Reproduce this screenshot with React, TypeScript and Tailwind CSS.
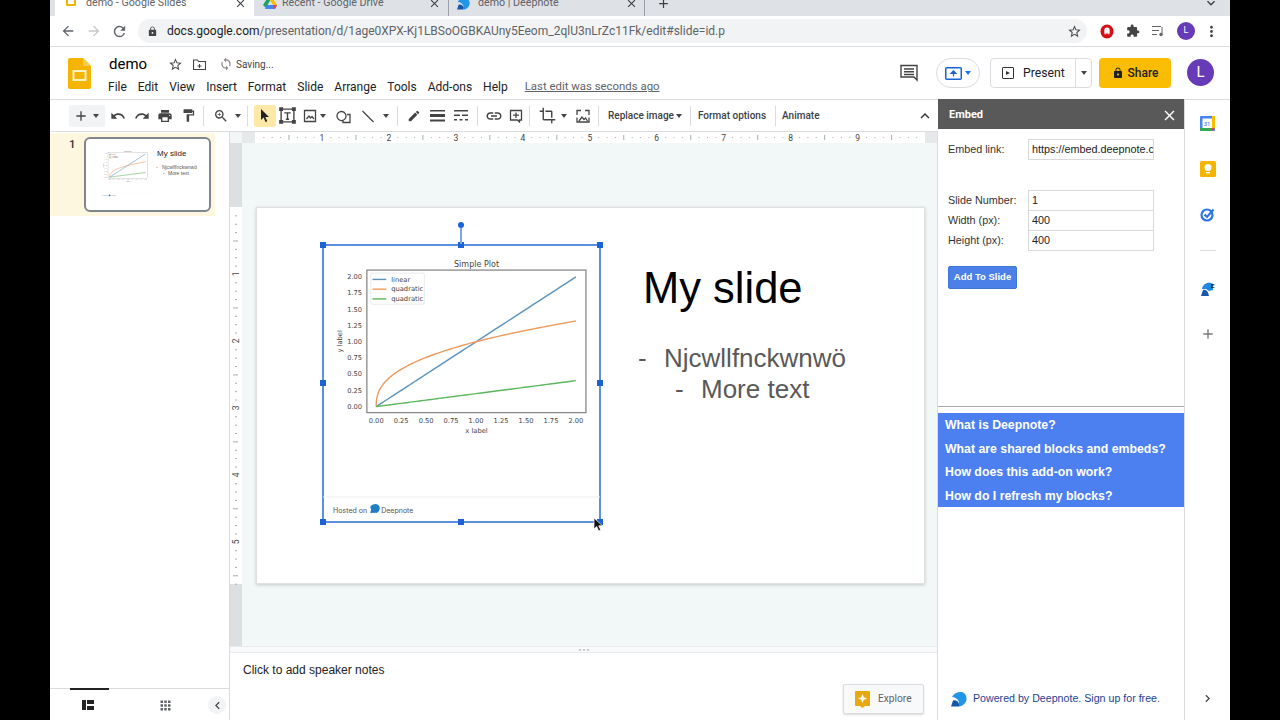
import React from 'react'
import {
  MdAdd, MdApps, MdArrowBack, MdArrowForward, MdChevronLeft, MdChevronRight, MdClose, MdCreate, MdCrop,
  MdExpandLess, MdExtension, MdFormatPaint, MdKeyboardArrowDown, MdLink, MdLock, MdMoreVert, MdPrint, MdRedo,
  MdRefresh, MdStarBorder, MdSync, MdUndo, MdZoomIn,
} from 'react-icons/md'

const DeepnoteLogo = ({ size = 16 }: { size?: number }) => (
  <svg width={size} height={size} viewBox="0 0 16 16">
    <path d="M1 6C3 2 7 .5 11 1c3 1 5 4 4.500 7.500C15 12 12 15 8 15.500L8 11C7 8 4 6 1 6Z" fill="#2196e8" />
    <path d="M0 15.500 2 9.500C4 8.500 7 9.500 8 12.500V15.500Z" fill="#1557a8" />
  </svg>
)

const Caret = ({ color = 'border-t-[#444]' }: { color?: string }) => (
  <span className={`inline-block w-0 h-0 border-x-[3.500px] border-x-transparent border-t-[4px] ${color}`} />
)

const Sep = () => <span className="block w-px h-[20px] bg-[#dadce0] shrink-0" />

const Tab = ({ icon, title, active, width }: { icon: React.ReactNode; title: string; active?: boolean; width: string }) => (
  <div className={`${width} h-[16px] pb-[10px] flex items-center shrink-0 ${active ? 'bg-white' : ''}`}>
    {icon}
    <span className="text-[10.700px] text-[#5f6368] font-['Roboto',sans-serif] flex-1 leading-none">{title}</span>
    <MdClose className="text-[#3c4043] text-[13px] shrink-0" />
  </div>
)

// matplotlib figure embedded in the slide, drawn in the coordinates of its 278px box
const Plot = ({ className, weight = 1.4 }: { className?: string; weight?: number }) => {
  const x0 = 54
  const y0 = 162
  const sx = 99.5
  const sy = 64.6
  const curve = (fn: (x: number) => number) => {
    const pts: string[] = []
    for (let i = 0; i <= 80; i++) {
      const x = 2 * Math.pow(i / 80, 2)
      pts.push(`${(x0 + x * sx).toFixed(2)},${(y0 - fn(x) * sy).toFixed(2)}`)
    }
    return pts.join(' ')
  }
  const ticks = ['0.00', '0.25', '0.50', '0.75', '1.00', '1.25', '1.50', '1.75', '2.00']
  return (
    <svg viewBox="0 0 278 278" className={className} fontFamily="'DejaVu Sans',sans-serif" fill="#444">
      <text x="154" y="22.500" fontSize="8" textAnchor="middle">Simple Plot</text>
      <rect x="44.700" y="26" width="218.300" height="142" fill="#fff" stroke="#8a8a8a" strokeWidth="1.300" />
      {ticks.map((t, i) => (
        <g key={t}>
          <text x={x0 + i * 24.875} y="178" fontSize="6.700" textAnchor="middle">{t}</text>
          <text x="40" y={y0 + 2.300 - i * 16.15} fontSize="6.700" textAnchor="end">{t}</text>
        </g>
      ))}
      <text x="154" y="188" fontSize="6.700" textAnchor="middle">x label</text>
      <text transform="translate(20 97) rotate(-90)" fontSize="6.700" textAnchor="middle">y label</text>
      <polyline points={curve((x) => x)} fill="none" stroke="#5b93bd" strokeWidth={weight} />
      <polyline points={curve((x) => Math.pow(x, 0.4))} fill="none" stroke="#ee9a5d" strokeWidth={weight} />
      <polyline points={curve((x) => 0.2 * x)} fill="none" stroke="#5cb85c" strokeWidth={weight} />
      <rect x="48.700" y="29" width="53.300" height="31" rx="1.500" fill="#fff" stroke="#ddd" strokeWidth=".6" />
      <path d="M50.300 35.300H64" stroke="#5b93bd" strokeWidth={weight} />
      <path d="M50.300 45H64" stroke="#ee9a5d" strokeWidth={weight} />
      <path d="M50.300 54.700H64" stroke="#5cb85c" strokeWidth={weight} />
      <text x="69" y="37.500" fontSize="6.700">linear</text>
      <text x="69" y="47.300" fontSize="6.700">quadratic</text>
      <text x="69" y="57" fontSize="6.700">quadratic</text>
      <path d="M1 252H277" stroke="#eee" />
      <g fontFamily="'Inter',sans-serif" fontSize="7" fill="#555">
        <text x="11" y="268">Hosted on</text>
        <text x="59" y="268">Deepnote</text>
      </g>
      <path d="M48 262c2-3 6-3.500 8-2 2.500 2 2 6.500-1.500 8l-1-.2-5.500.2 1-3.500Z" fill="#1f7fc9" />
    </svg>
  )
}

const Handle = ({ className }: { className: string }) => (
  <span className={`absolute w-[6px] h-[6px] bg-[#1a62d6] ${className}`} />
)

const HorizontalRuler = () => {
  const marks = Array.from({ length: 80 }, (_, i) => i)
  return (
    <svg width="683" height="11" className="block" fontFamily="'Roboto',sans-serif">
      <rect x="13" width="670" height="11" fill="#fff" />
      {marks.map((i) => {
        const x = 13 + i * 8.37
        if (i % 8 === 0) {
          return i === 0 ? null : (
            <text key={i} x={x} y="8.500" fontSize="8.500" fill="#444" textAnchor="middle">{i / 8}</text>
          )
        }
        return <rect key={i} x={x} y={i % 4 === 0 ? 3 : 5} width="1" height={i % 4 === 0 ? 5 : 1} fill="#a8acb0" />
      })}
    </svg>
  )
}

const VerticalRuler = () => {
  const marks = Array.from({ length: 46 }, (_, i) => i)
  return (
    <svg width="12" height="503" className="block shrink-0" fontFamily="'Roboto',sans-serif">
      <rect width="12" height="503" fill="#dde0e3" />
      <rect y="64" width="12" height="377" fill="#fff" />
      {marks.map((i) => {
        const y = 64 + i * 8.37
        if (i % 8 === 0) {
          return i === 0 ? null : (
            <text key={i} transform={`translate(9 ${y}) rotate(-90)`} fontSize="8.500" fill="#444" textAnchor="middle">{i / 8}</text>
          )
        }
        return <rect key={i} x={i % 4 === 0 ? 3 : 5} y={y} width={i % 4 === 0 ? 5 : 2} height="1" fill="#a8acb0" />
      })}
    </svg>
  )
}

const ToolIcon = ({ d, size = 16 }: { d: string; size?: number }) => (
  <svg width={size} height={size} viewBox="0 0 16 16" fill="none" stroke="#444" strokeWidth="1.300">
    <path d={d} />
  </svg>
)

const Field = ({ label, value, className }: { label: string; value: string; className?: string }) => (
  <div className={`flex items-center h-[20px] ${className ?? ''}`}>
    <span className="w-[80px] text-[#333]">{label}</span>
    <div className="w-[126px] h-[21px] border border-[#d9d9d9] bg-white pl-[3px] flex items-center overflow-hidden whitespace-nowrap text-[#222]">{value}</div>
  </div>
)

const Faq = ({ children }: { children: string }) => (
  <div className="h-[23.500px] flex items-center pl-[7px] pt-[1.500px] text-[12.300px] font-bold text-white bg-[#4c80f1]">{children}</div>
)

export default function App() {
  return (
    <div className="w-[1280px] h-[720px] bg-black px-[50px] overflow-hidden font-['Roboto',sans-serif]">
      <div className="w-[1180px] h-[720px] bg-white flex flex-col overflow-hidden">
        {/* browser tabs */}
        <div className="h-[16px] bg-[#dee1e6] flex items-start overflow-hidden shrink-0 pl-[5px]">
          <Tab
            active
            width="w-[199px] pl-[11px] pr-[7px]"
            title="demo - Google Slides"
            icon={<span className="w-[10px] h-[13px] mr-[10px] -mt-[7px] rounded-[1px] border-[2px] border-[#f4b400] bg-white shrink-0" />}
          />
          <Tab
            width="w-[194px] pl-[9px] pr-[7px]"
            title="Recent - Google Drive"
            icon={
              <svg width="14" height="12" viewBox="0 0 14 12" className="mr-[5px] shrink-0">
                <path d="M5 0h4l5 8h-4Z" fill="#fbbc04" />
                <path d="M5 0l2 3.500L3 11 0 8Z" fill="#1ea362" />
                <path d="M4 8h10l-2 4H2Z" fill="#4285f4" />
                <path d="M11 8h3l-2 4-2-2Z" fill="#ea4335" />
              </svg>
            }
          />
          <span className="w-px h-[16px] bg-[#9aa0a6] shrink-0" />
          <Tab
            width="w-[195px] pl-[8px] pr-[6px]"
            title="demo | Deepnote"
            icon={<span className="mr-[8px] shrink-0"><DeepnoteLogo size={13} /></span>}
          />
          <span className="w-px h-[16px] bg-[#9aa0a6] shrink-0" />
          <MdAdd className="text-[#3c4043] text-[15px] ml-[11px] -mt-[4px] shrink-0" />
          <MdKeyboardArrowDown className="text-[#3c4043] text-[16px] ml-auto mr-[11px] -mt-[5px] shrink-0" />
        </div>

        {/* address bar */}
        <div className="h-[31px] flex items-center border-b border-[#dadce0] shrink-0 text-[#5f6368]">
          <MdArrowBack className="text-[16px] ml-[10px] text-[#5f6368]" />
          <MdArrowForward className="text-[16px] ml-[10px] text-[#c4c7cb]" />
          <MdRefresh className="text-[17px] ml-[9px]" />
          <div className="w-[949px] h-[24px] ml-[10px] rounded-full bg-[#f1f3f4] flex items-center pl-[9px] pr-[5px]">
            <MdLock className="text-[11px] mr-[9px] text-[#444]" />
            <span className="text-[12px] text-[#5f6368] whitespace-nowrap">
              <span className="text-[#202124]">docs.google.com</span>/presentation/d/1age0XPX-Kj1LBSoOGBKAUny5Eeom_2qlU3nLrZc11Fk/edit#slide=id.p
            </span>
            <MdStarBorder className="text-[15px] ml-auto text-[#444]" />
          </div>
          <svg width="14" height="15" viewBox="0 0 14 15" className="ml-[13px]">
            <ellipse cx="7" cy="7.500" rx="6.500" ry="7" fill="#d50f16" />
            <rect x="4.300" y="3.500" width="5.400" height="7.500" rx="2.500" fill="#fff" />
            <path d="M5.500 9.500h3V13h-3Z" fill="#d50f16" />
          </svg>
          <MdExtension className="text-[14px] ml-[12px] text-[#444]" />
          <svg width="13" height="12" viewBox="0 0 13 12" className="ml-[12px]" stroke="#666" fill="none">
            <path d="M0 1.500h9M0 5.500h7M0 9.500h5M10 2v7.500" />
            <circle cx="9" cy="9.500" r="1.300" fill="#666" />
          </svg>
          <span className="w-[18px] h-[18px] ml-[12px] rounded-full bg-[#673ab7] text-white text-[9px] flex items-center justify-center">L</span>
          <MdMoreVert className="text-[17px] ml-[8px] text-[#444]" />
        </div>

        {/* docs header */}
        <div className="h-[52px] flex shrink-0 relative">
          <svg width="23" height="31" viewBox="0 0 23 31" className="ml-[18px] mt-[11px] shrink-0">
            <path d="M2 0h13l8 8v21a2 2 0 0 1-2 2H2a2 2 0 0 1-2-2V2a2 2 0 0 1 2-2Z" fill="#f4b400" />
            <path d="M15 0l8 8h-8Z" fill="#f7cb4d" />
            <rect x="5.500" y="13" width="12" height="9" fill="none" stroke="#fff3c4" strokeWidth="2" />
          </svg>
          <div className="ml-[18px] flex flex-col">
            <div className="flex items-center h-[20px] mt-[7px]">
              <span className="text-[15px] text-black leading-none w-[59px]">demo</span>
              <MdStarBorder className="text-[15px] text-[#444]" />
              <svg width="13" height="11" viewBox="0 0 13 11" className="ml-[10px]" fill="none" stroke="#444" strokeWidth="1.100">
                <path d="M.5 1h4l1.200 1.500h6.800v8H.5ZM6.500 5v4M4.500 7h4" />
              </svg>
              <MdSync className="text-[14px] text-[#888] ml-[13px]" />
              <span className="text-[10px] text-[#444] ml-[3px]">Saving...</span>
            </div>
            <div className="flex items-center h-[20px] mt-[3px] -ml-px gap-x-[11px] text-[12px] text-[#202124] whitespace-nowrap">
              <span>File</span>
              <span>Edit</span>
              <span>View</span>
              <span>Insert</span>
              <span>Format</span>
              <span>Slide</span>
              <span>Arrange</span>
              <span>Tools</span>
              <span>Add-ons</span>
              <span>Help</span>
              <span className="ml-[6px] text-[11.400px] text-[#5f6368] underline">Last edit was seconds ago</span>
            </div>
          </div>
          <div className="ml-auto flex items-start pt-[11px] pr-[16px]">
            <svg width="18" height="18" viewBox="0 0 18 18" fill="none" stroke="#444" strokeWidth="1.400" className="mt-[6px]">
              <path d="M1 1.500h16v14.500l-3-3H1ZM4 5h10M4 7.800h10M4 10.500h10" />
            </svg>
            <div className="w-[44px] h-[30px] ml-[18px] rounded-full border border-[#dadce0] flex items-center justify-center gap-[3px]">
              <svg width="17" height="13" viewBox="0 0 17 13" fill="none">
                <rect x=".75" y=".75" width="15.500" height="11.500" rx="1" stroke="#1a62d6" strokeWidth="1.500" />
                <path d="M8.500 9.500V5M6 6.500 8.500 3.800 11 6.500Z" stroke="#1a62d6" strokeWidth="1.200" fill="#1a62d6" />
              </svg>
              <Caret color="border-t-[#1a73e8]" />
            </div>
            <div className="w-[102px] h-[30px] ml-[10px] rounded-[4px] border border-[#dadce0] flex items-center">
              <span className="w-[12px] h-[12px] ml-[11px] border-[1.500px] border-[#333] rounded-[1px] flex items-center justify-center">
                <span className="w-0 h-0 border-y-[2.500px] border-y-transparent border-l-[4px] border-l-[#333]" />
              </span>
              <span className="ml-[9px] text-[12.200px] text-[#202124] w-[52px]">Present</span>
              <span className="w-px h-[28px] bg-[#dadce0]" />
              <span className="flex-1 flex justify-center"><Caret /></span>
            </div>
            <div className="w-[72px] h-[30px] ml-[7px] rounded-[4px] bg-[#fbbc04] flex items-center justify-center gap-[4px] text-[12px] font-medium text-[#202124]">
              <MdLock className="text-[12px]" />
              Share
            </div>
            <span className="w-[27px] h-[27px] ml-[16px] mt-px rounded-full bg-[#673ab7] text-white text-[15px] flex items-center justify-center">L</span>
          </div>
        </div>

        <div className="flex flex-1 min-h-0 border-t border-[#dadce0] -mb-px">
          <div className="w-[888px] flex flex-col shrink-0">
            {/* toolbar */}
            <div className="h-[32px] flex items-center border-b border-[#dadce0] pl-[19px] shrink-0">
              <div className="w-[36px] h-[22px] bg-[#f1f3f4] rounded-[2px] flex items-center pl-[4px] gap-[4px]">
                <MdAdd className="text-[16px] text-[#444]" />
                <Caret />
              </div>
              <MdUndo className="text-[16px] text-[#444] ml-[5px]" />
              <MdRedo className="text-[16px] text-[#444] ml-[8px]" />
              <MdPrint className="text-[16px] text-[#444] ml-[7px]" />
              <MdFormatPaint className="text-[15px] text-[#444] ml-[8px]" />
              <span className="ml-[7px]"><Sep /></span>
              <MdZoomIn className="text-[16px] text-[#444] ml-[9px]" />
              <span className="ml-[6px] flex"><Caret /></span>
              <span className="ml-[6px]"><Sep /></span>
              <div className="w-[22px] h-[22px] ml-[6px] bg-[#fde8a8] rounded-[2px] flex items-center justify-center">
                <svg width="10" height="14" viewBox="0 0 10 14"><path d="M1 0v11l2.600-2.500L5.500 13l1.800-.8-2-4.300H9Z" fill="#222" /></svg>
              </div>
              <span className="ml-[3px] flex">
                <ToolIcon size={17} d="M2 2h12v12H2ZM5 5.500h6M8 5.500v6M6.500 11.500h3M.8.800h2.400v2.400H.8ZM12.800.800h2.400v2.400h-2.400ZM.8 12.800h2.400v2.400H.8ZM12.800 12.800h2.400v2.400h-2.400Z" />
              </span>
              <span className="ml-[6px] flex"><ToolIcon d="M2.500 2.500h11v11h-11ZM4.500 11l2.500-3 1.500 2 1.500-1.500 2 2.500" /></span>
              <span className="ml-[2px] flex"><Caret /></span>
              <span className="ml-[10px] flex"><ToolIcon d="M9.500 6a4.500 4.500 0 1 1-8.500 2 4.500 4.500 0 0 1 8.500-2ZM11 6.500h3v8H7V12" /></span>
              <span className="ml-[8px] flex"><ToolIcon d="M2.500 3 13.500 14" /></span>
              <span className="ml-[7px] flex"><Caret /></span>
              <span className="ml-[8px]"><Sep /></span>
              <MdCreate className="text-[14px] text-[#444] ml-[9px]" />
              <span className="ml-[9px] flex">
                <svg width="15" height="12" viewBox="0 0 15 12" fill="#444"><rect width="15" height="1.500" /><rect y="4" width="15" height="3" /><rect y="9.500" width="15" height="2" /></svg>
              </span>
              <span className="ml-[9px] flex">
                <svg width="14" height="12" viewBox="0 0 14 12" fill="#444">
                  <rect width="14" height="1.500" /><rect y="4.500" width="6" height="1.500" /><rect x="8" y="4.500" width="6" height="1.500" />
                  <rect y="9" width="3" height="1.500" /><rect x="5.500" y="9" width="3" height="1.500" /><rect x="11" y="9" width="3" height="1.500" />
                </svg>
              </span>
              <span className="ml-[9px]"><Sep /></span>
              <MdLink className="text-[18px] text-[#444] ml-[7px]" />
              <span className="ml-[5px] flex"><ToolIcon d="M2.500 2.500h11v9.500h-2v2l-2-2h-7ZM8 4.500v5.500M5 7.200h6" /></span>
              <span className="ml-[5px]"><Sep /></span>
              <MdCrop className="text-[17px] text-[#444] ml-[9px]" />
              <span className="ml-[5px] flex"><Caret /></span>
              <span className="ml-[8px] flex"><ToolIcon d="M2 7V2.500h4M10 2.500h4V7M2 9.500v4.500h12V9.500M4 13l3-4 2 2.500 1.500-1.500 2 3" /></span>
              <span className="ml-[7px]"><Sep /></span>
              <div className="ml-[9px] flex items-center gap-[2px] text-[10px] font-medium text-[#3c4043] whitespace-nowrap">
                Replace image
                <Caret />
              </div>
              <span className="ml-[8px]"><Sep /></span>
              <span className="ml-[7px] text-[10px] font-medium text-[#3c4043] whitespace-nowrap">Format options</span>
              <span className="ml-[9px]"><Sep /></span>
              <span className="ml-[6px] text-[10px] font-medium text-[#3c4043]">Animate</span>
              <MdExpandLess className="text-[18px] text-[#333] ml-[96px]" />
            </div>

            <div className="flex flex-1 min-h-0">
              {/* filmstrip */}
              <div className="w-[180px] border-r border-[#dadce0] flex flex-col shrink-0">
                <div className="w-[165px] h-[83px] mt-px bg-[#fef7e0] flex pt-[4px] pl-[19px]">
                  <span className="text-[11.500px] w-[15px] text-[#333] font-medium mt-[1px] leading-[12px]">1</span>
                  <div className="w-[127px] h-[75px] rounded-[6px] border-2 border-[#80868b] bg-white relative overflow-hidden">
                    <Plot className="absolute left-[14px] top-[9px] w-[50px] h-[50px]" weight={3.500} />
                    <span className="absolute left-[71px] top-[10px] text-[8px] leading-[10px] text-[#222] font-['Liberation_Sans',sans-serif] whitespace-nowrap">My slide</span>
                    <span className="absolute left-[70px] top-[25px] text-[5px] leading-[6px] text-[#555] font-['Liberation_Sans',sans-serif]">-</span>
                    <span className="absolute left-[76px] top-[25px] text-[5px] leading-[6px] text-[#555] font-['Liberation_Sans',sans-serif] whitespace-nowrap">Njcwllfnckwnwö</span>
                    <span className="absolute left-[77px] top-[31px] text-[5px] leading-[6px] text-[#555] font-['Liberation_Sans',sans-serif]">-</span>
                    <span className="absolute left-[82px] top-[31px] text-[5px] leading-[6px] text-[#555] font-['Liberation_Sans',sans-serif] whitespace-nowrap">More text</span>
                  </div>
                </div>
                <div className="mt-auto h-[33px] border-t border-[#dadce0] relative flex items-center">
                  <span className="absolute left-[20px] -top-px w-[39px] h-[2px] bg-[#222]" />
                  <svg width="12" height="10" viewBox="0 0 12 10" fill="#222" className="ml-[32px]">
                    <rect width="4" height="10" /><rect x="5" width="7" height="4" /><rect x="5" y="6" width="7" height="4" />
                  </svg>
                  <MdApps className="text-[15px] text-[#5f6368] ml-[64px]" />
                  <span className="w-[18px] h-[18px] ml-[35px] rounded-full bg-[#f1f3f4] flex items-center justify-center">
                    <MdChevronLeft className="text-[15px] text-[#444]" />
                  </span>
                </div>
              </div>

              {/* canvas + notes */}
              <div className="flex-1 flex flex-col min-w-0 border-r border-[#dadce0]">
                <div className="h-[514px] flex flex-col bg-[#f2f7f7] shrink-0">
                  <div className="h-[11px] flex bg-[#e6e8ea] shrink-0">
                    <span className="w-[12px] h-[11px] bg-[#f3f6f6]" />
                    <HorizontalRuler />
                  </div>
                  <div className="flex flex-1 min-h-0">
                    <VerticalRuler />
                    <div className="flex-1">
                      <div className="relative w-[669px] h-[377px] ml-[14px] mt-[64px] bg-white border border-[#e0e0e0] shadow-[0_1px_3px_rgba(60,64,67,0.25)]">
                        <div className="absolute left-[65px] top-[36px] w-[279px] h-[279px] border-2 border-[#5b8fe0]">
                          <Plot className="absolute -left-[2px] -top-[2px] w-[279px] h-[279px]" />
                          <Handle className="-left-[4px] -top-[4px]" />
                          <Handle className="left-[134px] -top-[4px]" />
                          <Handle className="-right-[4px] -top-[4px]" />
                          <Handle className="-left-[4px] top-[134px]" />
                          <Handle className="-right-[4px] top-[134px]" />
                          <Handle className="-left-[4px] -bottom-[4px]" />
                          <Handle className="left-[134px] -bottom-[4px]" />
                          <Handle className="-right-[4px] -bottom-[4px]" />
                          <span className="absolute left-[136px] -top-[18px] w-[2px] h-[16px] bg-[#7ea6e6]" />
                          <span className="absolute left-[134px] -top-[24px] w-[6px] h-[6px] rounded-full bg-[#1a62d6]" />
                          <svg width="11" height="15" viewBox="0 0 11 15" className="absolute left-[269px] top-[271px]">
                            <path d="M1 1v11l2.700-2.500L5.700 14l2-.9-2-4.300H9.500Z" fill="#111" stroke="#fff" strokeWidth=".7" />
                          </svg>
                        </div>
                        <span className="absolute left-[386px] top-[55px] text-[43.500px] leading-[50px] text-black font-['Liberation_Sans',sans-serif] whitespace-nowrap">My slide</span>
                        <span className="absolute left-[381px] top-[135px] text-[26px] leading-[30px] text-[#595959] font-['Liberation_Sans',sans-serif] whitespace-nowrap">-</span>
                        <span className="absolute left-[407px] top-[135px] text-[26px] leading-[30px] text-[#595959] font-['Liberation_Sans',sans-serif] whitespace-nowrap">Njcwllfnckwnwö</span>
                        <span className="absolute left-[418px] top-[166px] text-[26px] leading-[30px] text-[#595959] font-['Liberation_Sans',sans-serif] whitespace-nowrap">-</span>
                        <span className="absolute left-[444px] top-[166px] text-[26px] leading-[30px] text-[#595959] font-['Liberation_Sans',sans-serif] whitespace-nowrap">More text</span>
                      </div>
                    </div>
                  </div>
                </div>
                <div className="h-[7px] bg-[#f8f9fa] border-y border-[#e8eaed] flex items-center justify-center gap-[2px] shrink-0">
                  <span className="w-[2px] h-[2px] rounded-full bg-[#bbb]" />
                  <span className="w-[2px] h-[2px] rounded-full bg-[#bbb]" />
                  <span className="w-[2px] h-[2px] rounded-full bg-[#bbb]" />
                </div>
                <div className="flex-1 relative pl-[13px] pt-[9px] text-[12px] leading-[16px] text-[#222] font-['Liberation_Sans',sans-serif]">
                  Click to add speaker notes
                  <div className="absolute right-[13px] top-[31px] w-[81px] h-[30px] rounded-[2px] border border-[#dadce0] shadow-[0_1px_2px_rgba(60,64,67,0.2)] bg-[#f8f9fa] flex items-center pl-[11px] gap-[8px] font-['Roboto',sans-serif] text-[10.200px] text-[#5f6368]">
                    <svg width="15" height="17" viewBox="0 0 15 17">
                      <path d="M1 0h13a1 1 0 0 1 1 1v13a1 1 0 0 1-1 1h-4l-2.500 2L5 15H1a1 1 0 0 1-1-1V1a1 1 0 0 1 1-1Z" fill="#e8a90e" />
                      <path d="M7.500 3 8.800 6.200 12 7.500 8.800 8.800 7.500 12 6.200 8.800 3 7.500 6.200 6.200Z" fill="#fff" />
                    </svg>
                    Explore
                  </div>
                </div>
              </div>
            </div>
          </div>

          {/* add-on side panel */}
          <div className="w-[247px] border-r border-[#dadce0] flex flex-col shrink-0 font-['Liberation_Sans',sans-serif] text-[10.800px]">
            <div className="h-[30px] bg-[#595959] flex items-center justify-between pl-[11px] pr-[6px] pt-[2px] shrink-0 -mt-px">
              <span className="text-[11px] font-bold text-white font-['Roboto',sans-serif]">Embed</span>
              <MdClose className="text-[17px] text-white" />
            </div>
            <div className="pl-[10px] pt-[10px] shrink-0">
              <Field label="Embed link:" value="https://embed.deepnote.c" />
              <Field className="mt-[31px]" label="Slide Number:" value="1" />
              <Field label="Width (px):" value="400" />
              <Field label="Height (px):" value="400" />
              <div className="w-[69px] h-[23px] mt-[16px] rounded-[2px] bg-[#4a80e8] border border-[#3f74d8] flex items-center justify-center text-[9.500px] font-bold text-white">Add To Slide</div>
            </div>
            <div className="mt-[117px] border-t border-[#aaa] shrink-0" />
            <div className="mt-[6px] shrink-0 rounded-[1px]">
              <Faq>What is Deepnote?</Faq>
              <Faq>What are shared blocks and embeds?</Faq>
              <Faq>How does this add-on work?</Faq>
              <Faq>How do I refresh my blocks?</Faq>
            </div>
            <div className="mt-auto mb-[14px] pl-[13px] flex items-center gap-[6px] text-[10.650px] text-[#1d3f91]">
              <DeepnoteLogo />
              Powered by Deepnote. Sign up for free.
            </div>
          </div>

          {/* right rail */}
          <div className="flex-1 flex flex-col items-center relative -mt-px border-t border-[#dadce0]">
            <svg width="15" height="15" viewBox="0 0 15 15" className="mt-[16px]">
              <rect width="15" height="15" rx="1" fill="#4285f4" />
              <rect x="2.500" y="2.500" width="10" height="10" fill="#fff" />
              <path d="M12 0h3v12h-3Z" fill="#fbbc04" /><path d="M0 12h12v3H1a1 1 0 0 1-1-1Z" fill="#34a853" /><path d="M12 12h3l-3 3Z" fill="#ea4335" />
              <text x="7" y="10" fontSize="6" textAnchor="middle" fill="#1a73e8" fontFamily="'Roboto',sans-serif">31</text>
            </svg>
            <svg width="16" height="16" viewBox="0 0 16 16" className="mt-[30px]">
              <rect width="16" height="16" rx="1.500" fill="#f4b400" />
              <circle cx="8" cy="6.500" r="3.500" fill="#fff" />
              <rect x="6" y="11" width="4" height="1.500" fill="#fff" />
            </svg>
            <svg width="15" height="15" viewBox="0 0 15 15" className="mt-[30px]">
              <circle cx="7" cy="8" r="5.500" fill="none" stroke="#2f74e6" strokeWidth="2.200" />
              <path d="M4.500 7.500 7 10l6.500-7.500" fill="none" stroke="#2f74e6" strokeWidth="2.200" />
            </svg>
            <span className="w-[16px] h-px bg-[#dadce0] mt-[28px]" />
            <svg width="14" height="15" viewBox="0 0 14 15" className="mt-[30px]">
              <path d="M1 8C2 3 6 1 10 2l2 1v6L8 10 5 8Z" fill="#1e88e5" />
              <path d="M0 15 2 9c3-1 5 1 6 6Z" fill="#1557a8" />
              <text x="10" y="7" fontSize="6" fontWeight="bold" fill="#222" fontFamily="'Roboto',sans-serif">E</text>
            </svg>
            <MdAdd className="text-[16px] text-[#777] mt-[30px]" />
            <MdChevronRight className="text-[15px] text-[#444] mt-auto mb-[15px]" />
          </div>
        </div>
      </div>
    </div>
  )
}
